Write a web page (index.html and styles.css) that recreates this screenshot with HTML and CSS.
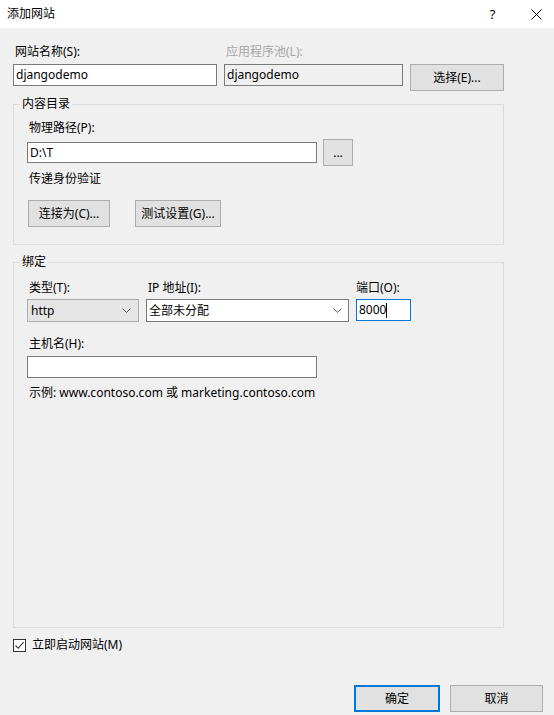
FILE: index.html
```html
<!DOCTYPE html>
<html lang="zh-CN">
<head>
<meta charset="utf-8">
<title>添加网站</title>
<link rel="stylesheet" href="styles.css">
</head>
<body>
<div class="dialog">
  <div class="titlebar">
    <span class="title">添加网站</span>
    <span class="help">?</span>
    <span class="close"><svg width="11" height="11" viewBox="0 0 11 11"><path d="M0.5 0.5L10.5 10.5M10.5 0.5L0.5 10.5" stroke="#000" stroke-width="1" fill="none"/></svg></span>
  </div>
  <div class="main">
    <div class="panel">
      <div class="site-row">
        <div class="lbl">网站名称(S):</div>
        <div class="lbl disabled">应用程序池(L):</div>
        <div></div>
        <div class="field">djangodemo</div>
        <div class="field readonly">djangodemo</div>
        <button class="btn">选择(E)...</button>
      </div>

      <fieldset class="group">
        <legend>内容目录</legend>
        <div class="group-body content-body">
          <div class="lbl">物理路径(P):</div>
          <div class="path-row">
            <div class="field path">D:\T</div>
            <button class="btn dots">...</button>
          </div>
          <div class="lbl auth-label">传递身份验证</div>
          <div class="auth-row">
            <button class="btn btn-connect">连接为(C)...</button>
            <button class="btn btn-test">测试设置(G)...</button>
          </div>
        </div>
      </fieldset>

      <fieldset class="group binding">
        <legend>绑定</legend>
        <div class="group-body binding-body">
          <div class="bind-grid">
            <div class="lbl">类型(T):</div>
            <div class="lbl">IP 地址(I):</div>
            <div class="lbl lbl-port">端口(O):</div>
            <div class="select dropdown"><span>http</span><svg class="chev" width="9" height="5" viewBox="0 0 9 5"><path d="M0.5 0.5L4.5 4.5L8.5 0.5" stroke="#606060" stroke-width="1" fill="none"/></svg></div>
            <div class="select combo"><span>全部未分配</span><svg class="chev" width="9" height="5" viewBox="0 0 9 5"><path d="M0.5 0.5L4.5 4.5L8.5 0.5" stroke="#606060" stroke-width="1" fill="none"/></svg></div>
            <div class="field port focused">8000<span class="caret"></span></div>
          </div>
          <div class="lbl host-label">主机名(H):</div>
          <div class="field host"></div>
          <div class="lbl example">示例: www.contoso.com 或 marketing.contoso.com</div>
        </div>
      </fieldset>
    </div>

    <div class="check-row">
      <span class="checkbox"><svg width="11" height="11" viewBox="0 0 11 11"><path d="M1.5 5.5L4.2 8.3L9.6 2.2" stroke="#333" stroke-width="1.1" fill="none"/></svg></span>
      <span class="check-text">立即启动网站(M)</span>
    </div>

    <div class="actions">
      <button class="btn default btn-ok">确定</button>
      <button class="btn btn-cancel">取消</button>
    </div>
  </div>
</div>
</body>
</html>
```

FILE: styles.css
```css
* {
  box-sizing: border-box;
}

html, body {
  margin: 0;
  padding: 0;
}

body {
  background: #f0f0f0;
  font-family: "Noto Sans", "Noto Sans CJK SC", sans-serif;
  font-size: 12px;
  line-height: 16px;
  color: #000;
}

.dialog {
  width: 554px;
  height: 715px;
  display: flex;
  flex-direction: column;
  overflow: hidden;
}

.titlebar {
  height: 28px;
  flex: none;
  background: #fff;
  display: flex;
  align-items: center;
  padding-left: 7px;
  padding-right: 3px;
}

.title {
  font-size: 12px;
}

.help {
  margin-left: auto;
  width: 21px;
  text-align: center;
  font-size: 13px;
}

.close {
  width: 30px;
  margin-left: 18px;
  display: flex;
  justify-content: center;
  align-items: center;
}

.main {
  flex: 1;
  display: flex;
  flex-direction: column;
  padding: 16px 11px 3px 13px;
}

.panel {
  flex: 1;
  display: flex;
  flex-direction: column;
  margin-right: 39px;
}

.lbl {
  line-height: 16px;
  padding-left: 2px;
  white-space: nowrap;
}

.lbl.disabled {
  color: #a6a6a6;
}

.site-row {
  display: grid;
  grid-template-columns: 204px 179px 94px;
  grid-template-rows: 16px auto;
  column-gap: 7px;
  row-gap: 4px;
  align-items: start;
}

.field {
  height: 22px;
  background: #fff;
  border: 1px solid #7a7a7a;
  padding: 0 2px;
  line-height: 20px;
  white-space: nowrap;
  overflow: hidden;
}

.field.readonly {
  background: #f0f0f0;
}

.btn {
  height: 27px;
  background: #e1e1e1;
  border: 1px solid #adadad;
  font-family: inherit;
  font-size: 12px;
  color: #000;
  padding: 0;
  margin: 0;
  line-height: 16px;
}

.btn.default {
  border: 2px solid #0078d7;
}

.group {
  margin: 0;
  padding: 0;
  min-width: 0;
  border: 1px solid #dcdcdc;
}

.group legend {
  padding: 0 2px;
  margin-left: 6px;
  line-height: 16px;
}

.group:first-of-type {
  margin-top: 5px;
}

.group-body {
  padding: 0 13px;
}

.content-body {
  padding-top: 8px;
  padding-bottom: 17px;
}

.path-row {
  margin-top: 3px;
  display: flex;
  align-items: center;
  gap: 6px;
}

.field.path {
  width: 290px;
  height: 21px;
  line-height: 19px;
}

.btn.dots {
  width: 30px;
}

.auth-label {
  margin-top: 5px;
}

.auth-row {
  margin-top: 13px;
  display: flex;
  gap: 25px;
  padding-left: 1px;
}

.btn-connect {
  width: 82px;
}

.btn-test {
  width: 86px;
}

.binding {
  margin-top: 9px;
  flex: 1;
}

.binding-body {
  padding-top: 10px;
}

.bind-grid {
  display: grid;
  grid-template-columns: 112px 203px 55px;
  column-gap: 7px;
  row-gap: 3px;
  align-items: start;
}

.lbl-port {
  padding-left: 0;
}

.select {
  height: 23px;
  display: flex;
  align-items: center;
  justify-content: space-between;
  padding: 0 7px 0 3px;
  white-space: nowrap;
}

.select.dropdown {
  background: #e5e5e5;
  border: 1px solid #adadad;
}

.select.combo {
  background: #fff;
  border: 1px solid #7a7a7a;
  padding-left: 2px;
  padding-right: 6px;
}

.field.port {
  border-color: #0078d7;
  display: flex;
  align-items: center;
}

.caret {
  display: inline-block;
  width: 1px;
  height: 15px;
  background: #000;
}

.host-label {
  margin-top: 14px;
}

.field.host {
  margin-top: 4px;
  width: 290px;
}

.example {
  margin-top: 7px;
}

.check-row {
  margin-top: 9px;
  display: flex;
  align-items: center;
  gap: 6px;
  height: 16px;
}

.checkbox {
  width: 13px;
  height: 13px;
  border: 1px solid #333;
  background: #fff;
  display: flex;
  align-items: center;
  justify-content: center;
}

.actions {
  margin-top: 32px;
  display: flex;
  justify-content: flex-end;
  gap: 10px;
}

.btn-ok {
  width: 86px;
}

.btn-cancel {
  width: 93px;
}
```
